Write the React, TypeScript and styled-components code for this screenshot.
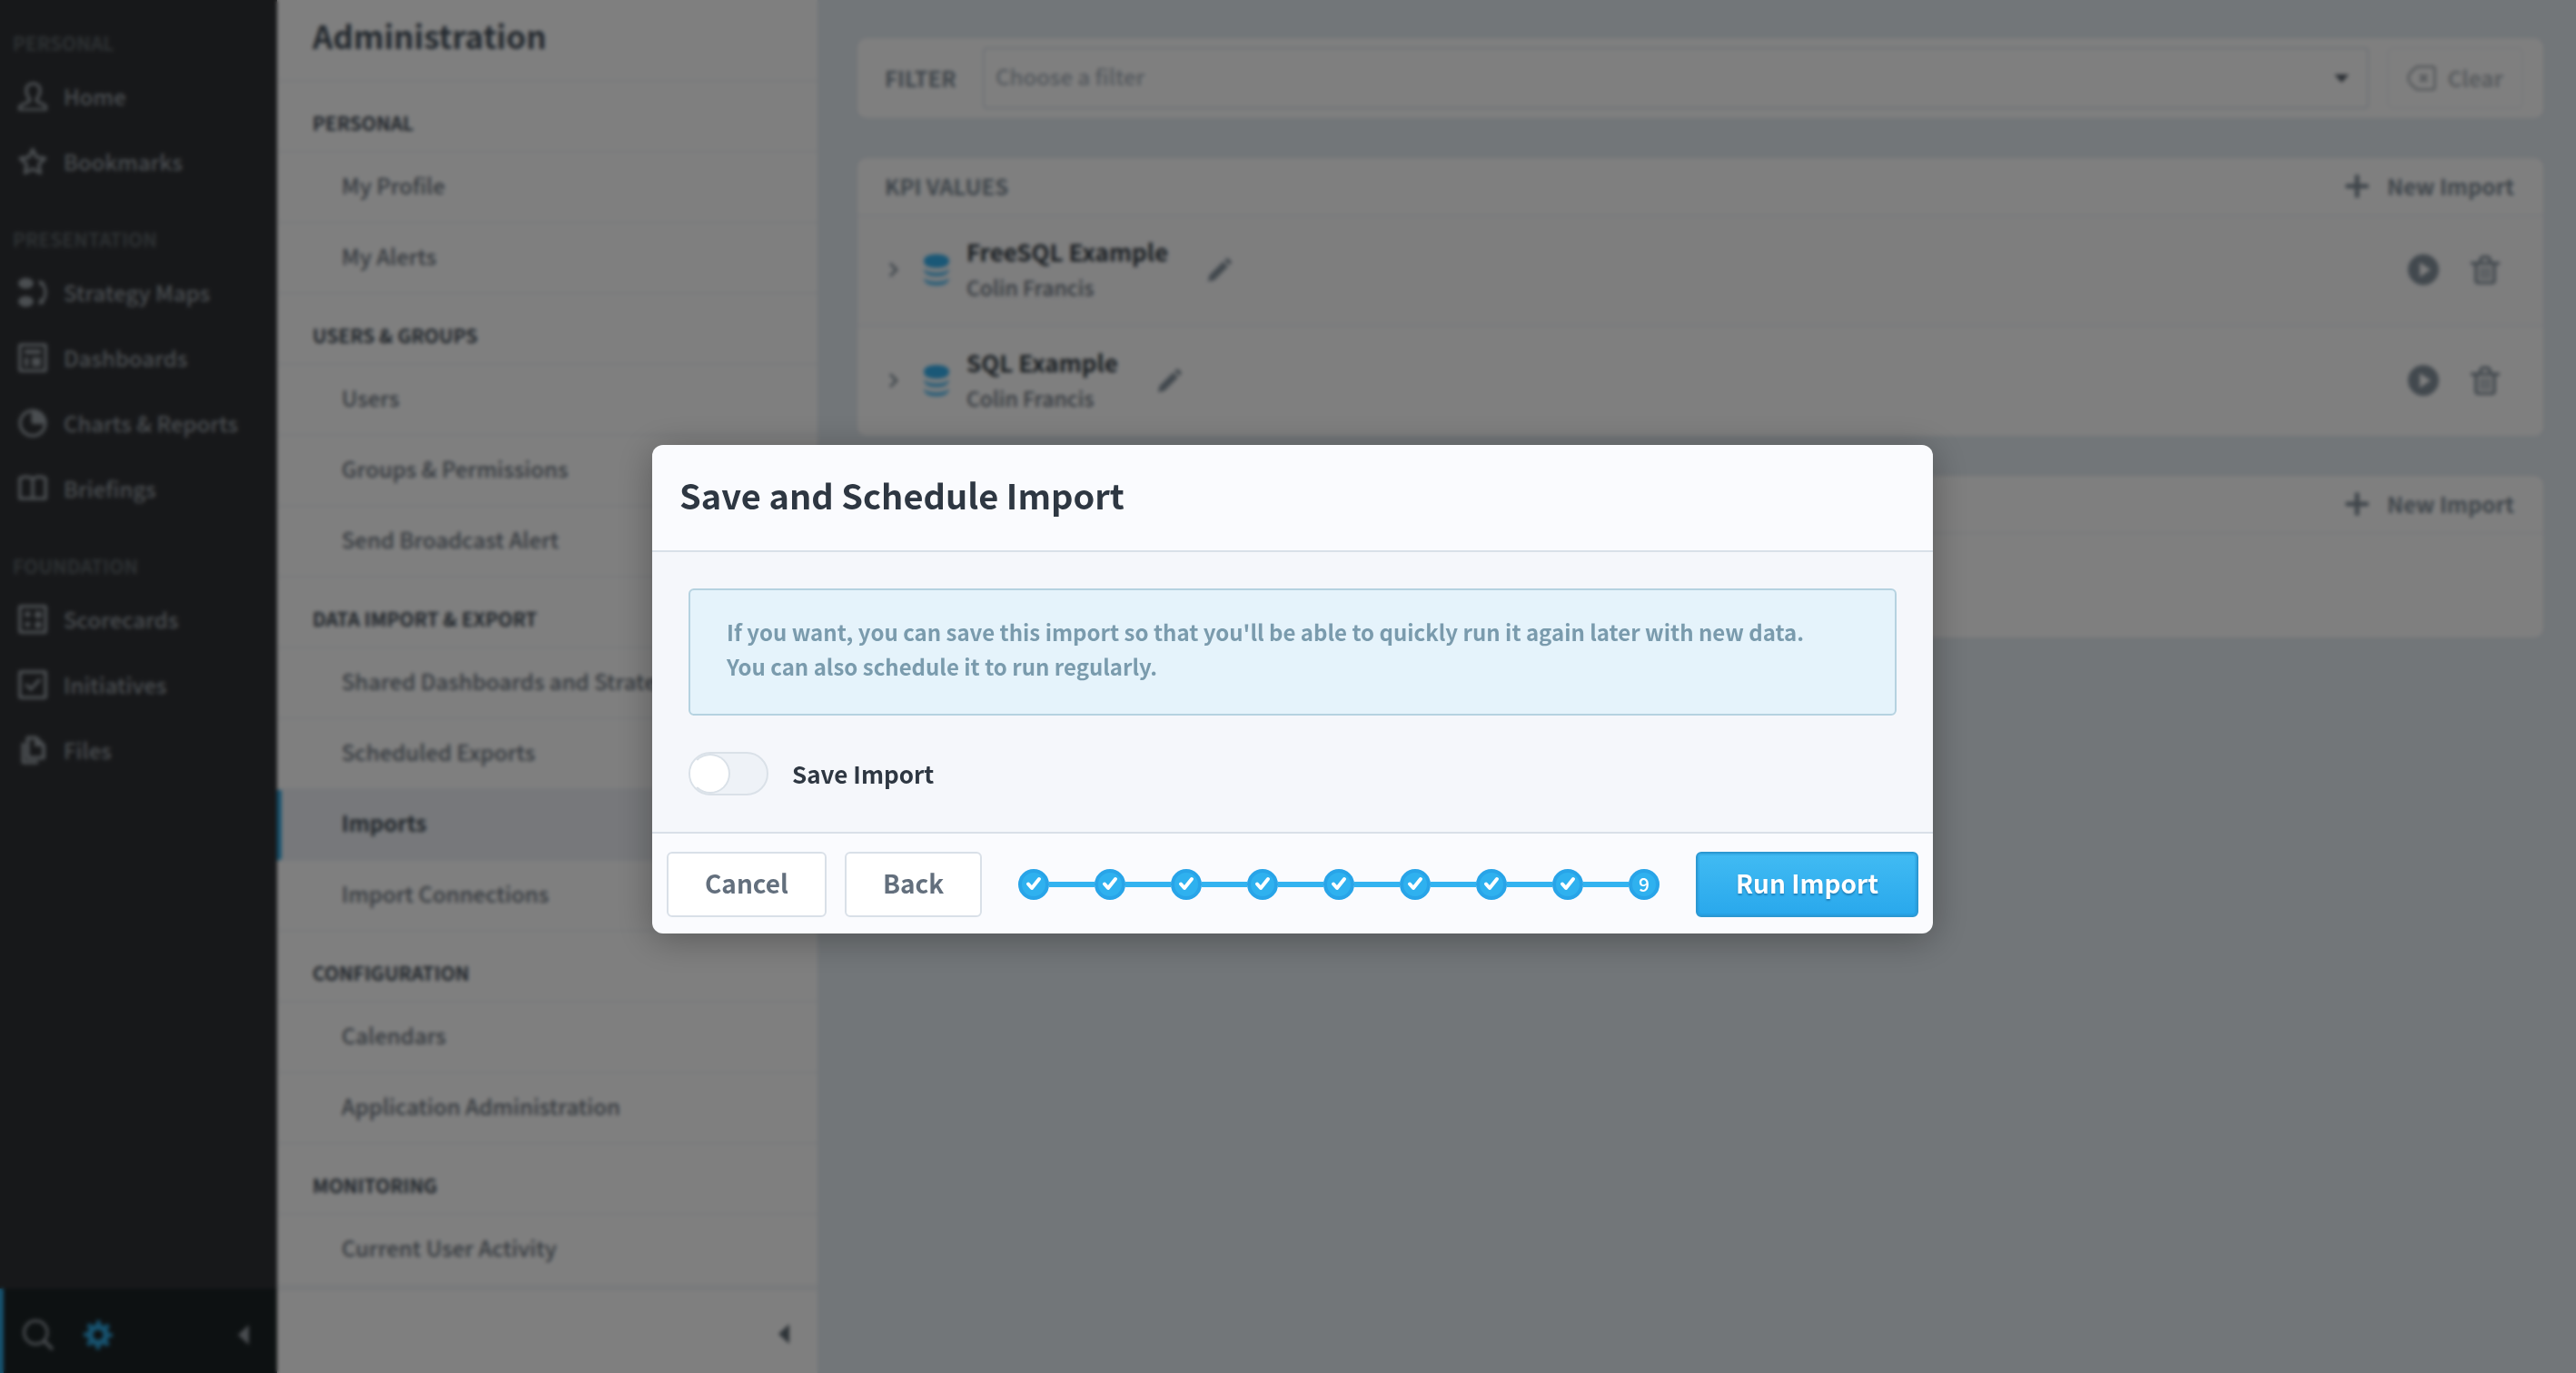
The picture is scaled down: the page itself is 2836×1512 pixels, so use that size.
import React, { useState } from "react";
import styled, { createGlobalStyle, css } from "styled-components";

const GlobalStyle = createGlobalStyle`
  *, *::before, *::after { box-sizing: border-box; }
  html, body, #root { height: 100%; }
  body {
    margin: 0;
    overflow: hidden;
    font-family: "Noto Sans CJK SC", "Noto Sans", sans-serif;
    font-size: 24px;
    font-weight: 500;
    color: #333d47;
    background: #e4ecf2;
  }
  button, select, input { font: inherit; color: inherit; margin: 0; }
  button { background: none; border: 0; padding: 0; }
  h1, h2, h3, p, ul { margin: 0; padding: 0; font: inherit; }
  ul { list-style: none; }
  a { color: inherit; text-decoration: none; }
  svg { display: block; flex: none; }
`;

/* ---------- icons ---------- */

type IconProps = { size?: number };

const Svg = ({ size = 32, box = 32, children }: IconProps & { box?: number; children: React.ReactNode }) => (
  <svg width={size} height={size} viewBox={`0 0 ${box} ${box}`} fill="none" stroke="currentColor" strokeWidth="3.6" aria-hidden="true">
    {children}
  </svg>
);

const PersonIcon = () => (
  <Svg>
    <path d="M16.500 2C12 2 9 5 9 9.500c0 4.500 1.500 7 3.500 9v3L2.500 26.500a2 2 0 0 0-.9 1.700V31h29.500v-2.800a2 2 0 0 0-.9-1.700L20.500 21.500v-3c2-2 3.500-4.500 3.500-9C24 5 21 2 16.500 2Z" strokeLinejoin="round" />
  </Svg>
);
const StarIcon = () => (
  <Svg>
    <path d="M16 2.500l4.100 8.600 9.500 1.300-6.900 6.600 1.700 9.500L16 24l-8.400 4.500 1.700-9.500-6.900-6.600 9.500-1.300Z" strokeLinejoin="round" />
  </Svg>
);
const MapIcon = () => (
  <Svg>
    <g fill="currentColor" stroke="none">
      <ellipse cx="8.500" cy="6" rx="8.500" ry="6" />
      <ellipse cx="8.500" cy="26" rx="8.500" ry="6" />
      <path d="M22 2.500l7 2-5 5Z" />
      <path d="M22 29.500l7-1-5-7Z" />
    </g>
    <path d="M25.500 5c6 6 6 16 0 22" strokeWidth="3.400" />
  </Svg>
);
const DashboardIcon = () => (
  <Svg>
    <rect x="1.800" y="1.800" width="28.400" height="28.400" rx="1" />
    <g fill="currentColor" stroke="none">
      <rect x="7" y="7" width="18" height="5" />
      <rect x="7" y="15.500" width="4.500" height="10" />
      <rect x="15" y="15.500" width="10" height="10" />
    </g>
  </Svg>
);
const PieIcon = () => (
  <Svg>
    <circle cx="16" cy="16" r="13.800" />
    <path d="M14.500 3a1.500 1.500 0 0 1 2-1A14 14 0 0 1 30 15.500V17H16.500a2 2 0 0 1-2-2Z" fill="currentColor" stroke="none" />
  </Svg>
);
const BookIcon = () => (
  <Svg>
    <path d="M16 5.500v22M16 5.500C14 3.500 11 3 8.500 3 5.500 3 3 4 1.800 5v22h28.400V5C29 4 26.500 3 23.500 3 21 3 18 3.500 16 5.500Z" strokeLinejoin="round" />
  </Svg>
);
const ScoreIcon = () => (
  <Svg>
    <rect x="1.800" y="1.800" width="28.400" height="28.400" rx="1" />
    <g fill="currentColor" stroke="none">
      <circle cx="10.500" cy="10.500" r="3.200" />
      <circle cx="22" cy="11" r="4" />
      <circle cx="10.500" cy="21.500" r="3" />
      <circle cx="22" cy="22" r="3.800" />
    </g>
  </Svg>
);
const CheckBoxIcon = () => (
  <Svg>
    <rect x="1.800" y="1.800" width="28.400" height="28.400" rx="1" />
    <path d="M8.500 15.500l5.500 5.500 10-11" />
  </Svg>
);
const FilesIcon = () => (
  <Svg>
    <path d="M10.500 2.500h9l8.500 8.500v13.500H10.500Z" strokeLinejoin="round" strokeWidth="4.200" />
    <path d="M18 1l11 11H18Z" fill="currentColor" stroke="none" />
    <path d="M5.500 8v21.500H22" strokeWidth="4" strokeLinejoin="round" />
  </Svg>
);
const SearchIcon = () => (
  <Svg size={34}>
    <circle cx="13.500" cy="13.500" r="12" strokeWidth="2.800" />
    <path d="M22 22l9 9" strokeWidth="3.400" />
  </Svg>
);
const GearIcon = () => (
  <Svg>
    <circle cx="16" cy="16" r="8.800" strokeWidth="6.600" />
    <circle cx="16" cy="16" r="13.600" strokeWidth="4.800" strokeDasharray="4.700 5.981" strokeDashoffset="2.350" />
  </Svg>
);
const TriangleLeft = () => (
  <svg width="12" height="22" viewBox="0 0 12 22" aria-hidden="true">
    <path d="M12 0v22L0 11Z" fill="currentColor" />
  </svg>
);
const CaretDown = () => (
  <svg width="16" height="9" viewBox="0 0 16 9" aria-hidden="true">
    <path d="M0 0h16L8 9Z" fill="currentColor" />
  </svg>
);
const ClearIcon = () => (
  <svg width="32" height="28" viewBox="0 0 32 28" fill="none" stroke="currentColor" strokeWidth="3" aria-hidden="true">
    <path d="M11 1.500h17a2.500 2.500 0 0 1 2.500 2.500v20a2.500 2.500 0 0 1-2.500 2.500H11L5 21.500Q1.500 17 1.500 14T5 6.500Z" strokeLinejoin="round" />
    <path d="M14.500 10l7.500 8M22 10l-7.500 8" strokeWidth="3.400" />
  </svg>
);
const PlusIcon = () => (
  <svg width="26" height="26" viewBox="0 0 26 26" stroke="currentColor" strokeWidth="5" strokeLinecap="round" aria-hidden="true">
    <path d="M13 2.500v21M2.500 13h21" />
  </svg>
);
const ChevronIcon = () => (
  <svg width="12" height="18" viewBox="0 0 12 18" fill="none" stroke="currentColor" strokeWidth="3" aria-hidden="true">
    <path d="M2 2l7 7-7 7" />
  </svg>
);
const DatabaseIcon = () => (
  <svg width="28" height="36" viewBox="0 0 28 36" fill="#35b0ee" aria-hidden="true">
    <path d="M0 8.500C0 3 6 1 14 1s14 2 14 7.500-6 7.500-14 7.500S0 14 0 8.500Z" />
    <path d="M0 17c3 3 8 4 14 4s11-1 14-4c0 5-5 8.500-14 8.500S0 22 0 17Z" opacity=".85" />
    <path d="M0 27c3 3 8 4 14 4s11-1 14-4c0 5-5 8.500-14 8.500S0 32 0 27Z" opacity=".85" />
  </svg>
);
const PencilIcon = () => (
  <svg width="26" height="26" viewBox="0 0 26 26" fill="currentColor" aria-hidden="true">
    <path d="M0 26l1.500-7L16.500 4l5.500 5.500L7 24.500ZM18 2.500L20 .8a2 2 0 0 1 2.600 0l2.600 2.600a2 2 0 0 1 0 2.600L23.500 8Z" />
  </svg>
);
const PlayIcon = () => (
  <svg width="34" height="34" viewBox="0 0 34 34" aria-hidden="true">
    <path fillRule="evenodd" fill="currentColor" d="M17 0a17 17 0 1 1 0 34 17 17 0 0 1 0-34Zm-4 9v16l12-8Z" />
  </svg>
);
const TrashIcon = () => (
  <svg width="32" height="32" viewBox="0 0 32 32" fill="none" stroke="currentColor" strokeWidth="3.600" aria-hidden="true">
    <path d="M0 9h32M6 9v19a2.500 2.500 0 0 0 2.500 2.500h15a2.500 2.500 0 0 0 2.500-2.500V9M10.500 8c0-4 1.500-6 3.500-6h4c2 0 3.500 2 3.500 6" />
    <path d="M11.800 13v13.500M16 13v13.500M20.200 13v13.500" strokeWidth="2.200" />
  </svg>
);
const TickIcon = () => (
  <svg width="18" height="16" viewBox="0 0 18 16" fill="none" stroke="#fff" strokeWidth="4" strokeLinecap="round" strokeLinejoin="round" aria-hidden="true">
    <path d="M3 8.500l4 4.500 8-10" />
  </svg>
);

/* ---------- shell ---------- */

const Shell = styled.div`
  display: grid;
  grid-template-columns: 305px 595px 1fr;
  height: 100vh;
`;

const Sidebar = styled.nav`
  display: flex;
  flex-direction: column;
  min-height: 0;
  background: #2f3135;
  color: #969da3;
`;

const SidebarGroups = styled.div`
  flex: 1;
  min-height: 0;
  display: flex;
  flex-direction: column;
  gap: 24px;
  padding-top: 23px;
`;

const SidebarHeading = styled.h2`
  height: 48px;
  padding-left: 14px;
  font-size: 21px;
  font-weight: 700;
  line-height: 48px;
  color: #5c6367;
`;

const SidebarLink = styled.a`
  display: flex;
  align-items: center;
  gap: 18px;
  height: 72px;
  padding: 0 0 2px 20px;
  line-height: 32px;
`;

const SidebarFooter = styled.div`
  display: flex;
  align-items: center;
  height: 93px;
  padding: 8px 31px 0 21px;
  border-left: 4px solid #2ea5de;
  background: #1b2325;
`;

const FooterButton = styled.button<{ $active?: boolean; $end?: boolean }>`
  display: flex;
  margin-left: ${(p) => (p.$end ? "auto" : "0")};
  margin-right: ${(p) => (p.$end ? "0" : "33px")};
  color: ${(p) => (p.$active ? "#2ea5de" : "#9299a0")};
`;

/* ---------- administration panel ---------- */

const Panel = styled.aside`
  display: flex;
  flex-direction: column;
  min-height: 0;
  background: #fff;
`;

const PanelTitle = styled.h1`
  height: 90px;
  padding-left: 39px;
  border-bottom: 2px solid #f1f4f8;
  font-size: 35px;
  font-weight: 700;
  line-height: 78px;
  color: #46515c;
`;

const PanelBody = styled.div`
  flex: 1;
  min-height: 0;
  overflow: hidden;
`;

const panelRow = css`
  height: 78px;
  border-bottom: 2px solid #eff3f8;
`;

const PanelHeading = styled.h2`
  ${panelRow}
  padding: 12px 0 0 39px;
  font-size: 21px;
  font-weight: 700;
  line-height: 66px;
  color: #434d57;
`;

const PanelLink = styled.a<{ $active?: boolean }>`
  ${panelRow}
  display: block;
  padding-left: ${(p) => (p.$active ? "66px" : "71px")};
  line-height: 72px;
  white-space: nowrap;
  overflow: hidden;
  color: #6b747e;
  ${(p) =>
    p.$active &&
    css`
      border-left: 5px solid #2ea5de;
      background: #eef1f6;
      font-weight: 700;
      color: #434d57;
    `}
`;

const PanelFooter = styled.div`
  display: flex;
  align-items: center;
  justify-content: flex-end;
  height: 98px;
  padding: 4px 31px 0 0;
  border-top: 8px solid #f4f6f9;
  color: #5c6770;
`;

/* ---------- content ---------- */

const Content = styled.main`
  display: flex;
  flex-direction: column;
  gap: 44px;
  min-width: 0;
  padding: 42px 36px 0 44px;
`;

const Card = styled.section`
  border-radius: 10px;
  background: #fff;
  box-shadow: 0 0 0 1px #dfe6ee;
  overflow: hidden;
`;

const FilterBar = styled(Card)`
  display: flex;
  align-items: center;
  gap: 20px;
  padding: 10px 22px 10px 30px;
`;

const CardLabel = styled.span`
  font-weight: 700;
  line-height: 40px;
  color: #7e8b96;
`;

const FilterLabel = styled.label`
  width: 88px;
  font-weight: 700;
  line-height: 40px;
  color: #7e8b96;
`;

const SelectWrap = styled.div`
  flex: 1;
  display: grid;
  align-items: center;
  color: #555e68;
  > * { grid-area: 1 / 1; }
  > svg { justify-self: end; margin-right: 22px; pointer-events: none; }
`;

const Select = styled.select`
  width: 100%;
  height: 68px;
  padding: 0 12px 6px;
  border: 2px solid #dde4ec;
  border-radius: 4px;
  background: #fff;
  appearance: none;
  color: #a8b1bb;
`;

const ClearButton = styled.button`
  display: flex;
  align-items: center;
  gap: 12px;
  height: 68px;
  padding: 0 20px;
  border: 2px solid #f1f4f8;
  border-radius: 6px;
  color: #b4babf;
  font-weight: 700;
  line-height: 32px;
`;

const CardHeader = styled.header`
  display: flex;
  align-items: center;
  height: 64px;
  padding: 0 32px 0 30px;
  border-bottom: 2px solid #eff3f8;
`;

const NewImportButton = styled.button`
  display: flex;
  align-items: center;
  gap: 20px;
  margin-left: auto;
  font-weight: 700;
  line-height: 40px;
  color: #7e8b96;
`;

const ImportRow = styled.li<{ $shaded?: boolean }>`
  display: flex;
  align-items: center;
  height: ${(p) => (p.$shaded ? "122px" : "120px")};
  padding: 0 48px 2px 34px;
  border-bottom: ${(p) => (p.$shaded ? "2px solid #eff3f8" : "0")};
  background: ${(p) => (p.$shaded ? "#fcfcfd" : "#fff")};
  color: #85929d;
`;

const IconButton = styled.button`
  display: flex;
`;

const ImportKind = styled.span`
  margin: 0 19px 0 27px;
`;

const ImportText = styled.div`
  display: grid;
  padding-bottom: 2px;
  margin-right: 44px;
`;

const ImportName = styled.h3`
  font-size: 26px;
  font-weight: 700;
  line-height: 40px;
  color: #343d45;
`;

const ImportOwner = styled.p`
  font-size: 23px;
  line-height: 38px;
  color: #6b747e;
`;

const RowActions = styled.div`
  display: flex;
  align-items: center;
  gap: 35px;
  margin-left: auto;
`;

const EmptyBody = styled.div`
  height: 114px;
`;

/* ---------- dialog ---------- */

const Overlay = styled.div`
  position: fixed;
  inset: 0;
  display: grid;
  place-items: center;
  padding: 6px 0 0 10px;
  background: rgba(0, 0, 0, 0.5);
  backdrop-filter: blur(2px);
`;

const Dialog = styled.form`
  width: 1410px;
  max-width: 100%;
  border-radius: 12px;
  background: #fafbfe;
  box-shadow: 0 6px 40px rgba(0, 0, 0, 0.3);
  overflow: hidden;
`;

const DialogTitle = styled.h2`
  height: 118px;
  padding-left: 30px;
  border-bottom: 2px solid #d9e0e8;
  font-size: 38px;
  font-weight: 700;
  line-height: 110px;
  color: #2e3742;
`;

const DialogBody = styled.div`
  display: grid;
  gap: 40px;
  padding: 40px;
  background: #f5f7fb;
`;

const InfoBox = styled.p`
  padding: 27px 40px 33px;
  border: 2px solid #b5d2e0;
  border-radius: 6px;
  background: #e5f3fb;
  font-weight: 700;
  line-height: 38px;
  color: #7a9bad;
`;

const SwitchRow = styled.label`
  display: flex;
  align-items: center;
  gap: 26px;
  font-size: 26px;
  font-weight: 700;
  line-height: 48px;
  color: #2e3742;
`;

const SwitchInput = styled.input`
  appearance: none;
  display: flex;
  width: 88px;
  height: 48px;
  border: 2px solid #dae1e8;
  border-radius: 24px;
  background: #eef2f7;
  &::before {
    content: "";
    width: 44px;
    height: 44px;
    border: 2px solid #dae1e8;
    border-left-color: #fff;
    border-radius: 50%;
    background: #fff;
  }
  &:checked { justify-content: flex-end; background: #2fb1ef; }
`;

const DialogFooter = styled.footer`
  display: flex;
  align-items: center;
  height: 112px;
  padding: 2px 16px 0;
  border-top: 2px solid #d9e0e8;
`;

const Button = styled.button<{ $primary?: boolean }>`
  height: 72px;
  padding: ${(p) => (p.$primary ? "0 42px 4px" : "0 40px 4px")};
  margin-right: ${(p) => (p.$primary ? "0" : "20px")};
  border: 2px solid #d9e0e8;
  border-radius: 6px;
  background: #fff;
  font-size: 28px;
  font-weight: 700;
  color: #636f7d;
  ${(p) =>
    p.$primary &&
    css`
      border-color: #2b98d2;
      background: linear-gradient(#41bbf3, #29a8ec);
      box-shadow: inset 0 0 0 2px rgba(30, 140, 205, 0.25);
      color: #fff;
      text-shadow: 0 2px 2px rgba(0, 60, 110, 0.4);
    `}
`;

const Steps = styled.ol`
  flex: 1;
  display: flex;
  align-items: center;
  margin: 0 40px 0 20px;
  padding: 0;
  list-style: none;
`;

const Step = styled.li`
  display: flex;
  align-items: center;
  &:not(:first-child) { flex: 1; }
  &:not(:first-child)::before {
    content: "";
    flex: 1;
    height: 6px;
    background: #33b3f0;
  }
`;

const StepDot = styled.span`
  display: grid;
  place-items: center;
  width: 34px;
  height: 34px;
  padding-bottom: 2px;
  border: 4px solid #28a4e8;
  border-radius: 50%;
  background: #2fb1ef;
  font-size: 21px;
  line-height: 20px;
  color: #fff;
`;

/* ---------- data ---------- */

const sidebarGroups = [
  { title: "PERSONAL", links: [["Home", PersonIcon], ["Bookmarks", StarIcon]] },
  {
    title: "PRESENTATION",
    links: [["Strategy Maps", MapIcon], ["Dashboards", DashboardIcon], ["Charts & Reports", PieIcon], ["Briefings", BookIcon]],
  },
  { title: "FOUNDATION", links: [["Scorecards", ScoreIcon], ["Initiatives", CheckBoxIcon], ["Files", FilesIcon]] },
] as { title: string; links: [string, React.FC][] }[];

const panelGroups = [
  { title: "PERSONAL", links: ["My Profile", "My Alerts"] },
  { title: "USERS & GROUPS", links: ["Users", "Groups & Permissions", "Send Broadcast Alert"] },
  {
    title: "DATA IMPORT & EXPORT",
    links: ["Shared Dashboards and Strategy Maps", "Scheduled Exports", "Imports", "Import Connections"],
  },
  { title: "CONFIGURATION", links: ["Calendars", "Application Administration"] },
  { title: "MONITORING", links: ["Current User Activity"] },
];

const imports = [
  { name: "FreeSQL Example", owner: "Colin Francis" },
  { name: "SQL Example", owner: "Colin Francis" },
];

const stepCount = 9;

const NewImport = () => (
  <NewImportButton type="button">
    <PlusIcon />
    New Import
  </NewImportButton>
);

export default function App() {
  const [save, setSave] = useState(false);
  return (
    <>
      <GlobalStyle />
      <Shell>
        <Sidebar>
          <SidebarGroups>
            {sidebarGroups.map((group) => (
              <div key={group.title}>
                <SidebarHeading>{group.title}</SidebarHeading>
                {group.links.map(([label, Icon]) => (
                  <SidebarLink href="#" key={label}>
                    <Icon />
                    {label}
                  </SidebarLink>
                ))}
              </div>
            ))}
          </SidebarGroups>
          <SidebarFooter>
            <FooterButton type="button" aria-label="Search"><SearchIcon /></FooterButton>
            <FooterButton type="button" aria-label="Administration" $active><GearIcon /></FooterButton>
            <FooterButton type="button" aria-label="Collapse menu" $end><TriangleLeft /></FooterButton>
          </SidebarFooter>
        </Sidebar>

        <Panel>
          <PanelTitle>Administration</PanelTitle>
          <PanelBody>
            {panelGroups.map((group) => (
              <React.Fragment key={group.title}>
                <PanelHeading>{group.title}</PanelHeading>
                {group.links.map((label) => (
                  <PanelLink href="#" key={label} $active={label === "Imports"}>{label}</PanelLink>
                ))}
              </React.Fragment>
            ))}
          </PanelBody>
          <PanelFooter>
            <IconButton type="button" aria-label="Collapse panel"><TriangleLeft /></IconButton>
          </PanelFooter>
        </Panel>

        <Content>
          <FilterBar>
            <FilterLabel htmlFor="filter">FILTER</FilterLabel>
            <SelectWrap>
              <Select id="filter" defaultValue="">
                <option value="">Choose a filter</option>
              </Select>
              <CaretDown />
            </SelectWrap>
            <ClearButton type="button">
              <ClearIcon />
              Clear
            </ClearButton>
          </FilterBar>

          <Card>
            <CardHeader>
              <CardLabel>KPI VALUES</CardLabel>
              <NewImport />
            </CardHeader>
            <ul>
              {imports.map((item, i) => (
                <ImportRow key={item.name} $shaded={i % 2 === 0}>
                  <IconButton type="button" aria-label="Expand"><ChevronIcon /></IconButton>
                  <ImportKind><DatabaseIcon /></ImportKind>
                  <ImportText>
                    <ImportName>{item.name}</ImportName>
                    <ImportOwner>{item.owner}</ImportOwner>
                  </ImportText>
                  <IconButton type="button" aria-label="Edit"><PencilIcon /></IconButton>
                  <RowActions>
                    <IconButton type="button" aria-label="Run"><PlayIcon /></IconButton>
                    <IconButton type="button" aria-label="Delete"><TrashIcon /></IconButton>
                  </RowActions>
                </ImportRow>
              ))}
            </ul>
          </Card>

          <Card>
            <CardHeader>
              <NewImport />
            </CardHeader>
            <EmptyBody />
          </Card>
        </Content>
      </Shell>

      <Overlay>
        <Dialog role="dialog" aria-labelledby="dialog-title" onSubmit={(e) => e.preventDefault()}>
          <DialogTitle id="dialog-title">Save and Schedule Import</DialogTitle>
          <DialogBody>
            <InfoBox>
              If you want, you can save this import so that you'll be able to quickly run it again later with new data.
              <br />
              You can also schedule it to run regularly.
            </InfoBox>
            <SwitchRow>
              <SwitchInput type="checkbox" role="switch" checked={save} onChange={(e) => setSave(e.target.checked)} />
              Save Import
            </SwitchRow>
          </DialogBody>
          <DialogFooter>
            <Button type="button">Cancel</Button>
            <Button type="button">Back</Button>
            <Steps>
              {Array.from({ length: stepCount }, (_, i) => (
                <Step key={i}>
                  <StepDot>{i < stepCount - 1 ? <TickIcon /> : stepCount}</StepDot>
                </Step>
              ))}
            </Steps>
            <Button type="submit" $primary>Run Import</Button>
          </DialogFooter>
        </Dialog>
      </Overlay>
    </>
  );
}
